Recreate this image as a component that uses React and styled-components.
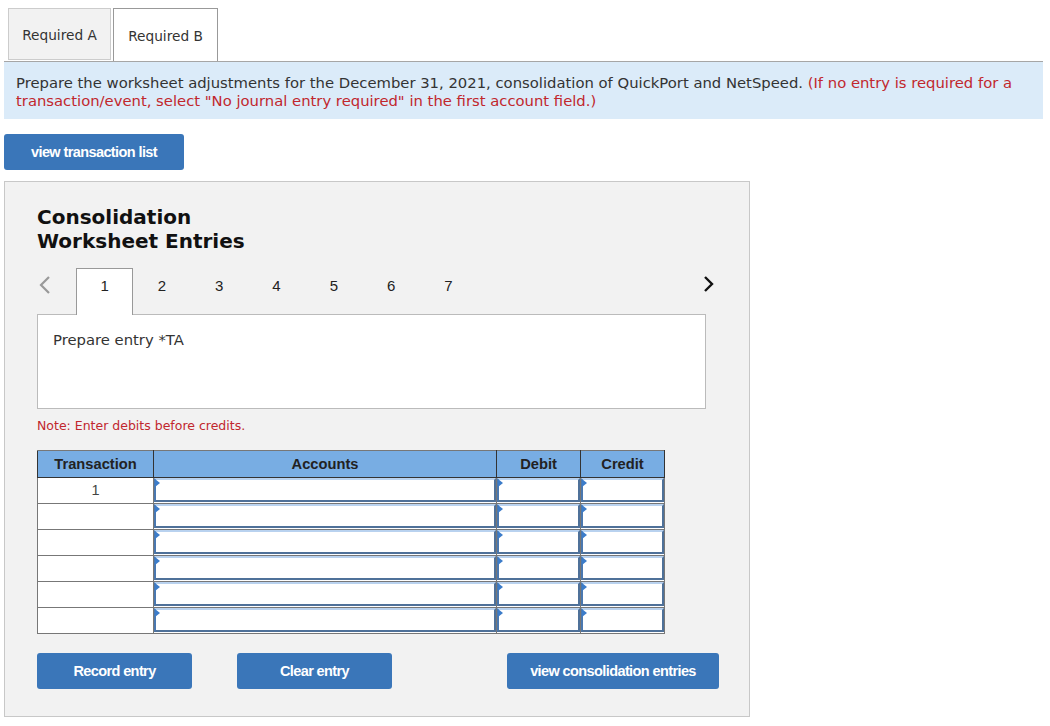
import React from 'react'
import styled, { createGlobalStyle } from 'styled-components'

const GlobalStyle = createGlobalStyle`
  body{
    margin: 0;
    background: #fff;
    font-family: "DejaVu Sans", Verdana, sans-serif;
    color: #222;
  }
`;

const Page = styled.div`
  padding: 8px 7px 0 4px;
`;

const TabBar = styled.div`
  display: flex;
  gap: 2px;
  padding-left: 4px;
  border-bottom: 1px solid #a6a6a6;
  height: 53px;
`;

const Tab = styled.div`
  width: ${p => p.active ? 105 : 103}px;
  height: ${p => p.active ? 53 : 52}px;
  box-sizing: border-box;
  border: 1px solid ${p => p.active ? '#999' : '#ccc'};
  border-bottom: ${p => p.active ? 'none' : '1px solid #ccc'};
  background: ${p => p.active ? '#fff' : '#f2f2f2'};
  display: flex;
  align-items: center;
  justify-content: center;
  font-size: 13.7px;
  color: #333;
  margin-bottom: ${p => p.active ? '-1px' : '0'};
  padding-top: 1px;
`;

const Banner = styled.div`
  background: #dbebf9;
  padding: 12px 12px 9px 12px;
  font-size: 14.8px;
  line-height: 18px;
  color: #333;
`;

const Hint = styled.span`
  color: #c1272d;
`;

const BlueButton = styled.button`
  background: #3a76b9;
  color: #fff;
  border: none;
  border-radius: 3px;
  height: 36px;
  width: ${p => p.w}px;
  font-family: "Liberation Sans", Arial, sans-serif;
  font-weight: bold;
  font-size: 14.5px;
  letter-spacing: -0.6px;
  padding: 0;
  cursor: pointer;
`;

const TopButton = styled(BlueButton)`
  margin-top: 15px;
`;

const Panel = styled.div`
  margin-top: 11px;
  width: 746px;
  height: 536px;
  box-sizing: border-box;
  background: #f2f2f2;
  border: 1px solid #c8c8c8;
  padding: 23px 32px 0 32px;
`;

const Title = styled.h1`
  margin: 0;
  font-size: 20px;
  line-height: 24px;
  font-weight: bold;
  color: #111;
`;

const Pager = styled.div`
  width: 678px;
  margin-top: 15px;
  display: flex;
  align-items: stretch;
  height: 46px;
`;

const Arrow = styled.div`
  width: 39px;
  display: flex;
  align-items: flex-start;
  padding-top: 8px;
  padding-left: 2px;
  box-sizing: border-box;
  margin-left: ${p => p.right ? 'auto' : '0'};
  justify-content: ${p => p.right ? 'flex-end' : 'flex-start'};
  padding-right: ${p => p.right ? '1px' : '0'};
`;

const PageTab = styled.div`
  width: 57.3px;
  box-sizing: border-box;
  display: flex;
  align-items: flex-start;
  justify-content: center;
  padding-top: 8px;
  font-family: "Liberation Sans", Arial, sans-serif;
  font-size: 15px;
  color: #222;
  background: ${p => p.active ? '#fff' : 'transparent'};
  border: 1px solid ${p => p.active ? '#999' : 'transparent'};
  border-bottom: none;
  position: relative;
  z-index: 1;
  margin-bottom: -1px;
`;

const Prompt = styled.div`
  width: 669px;
  height: 95px;
  box-sizing: border-box;
  background: #fff;
  border: 1px solid #bbb;
  padding: 16px 15px;
  font-size: 14.8px;
  color: #333;
`;

const Note = styled.div`
  margin-top: 9px;
  font-size: 12.5px;
  color: #c1272d;
  line-height: 16px;
`;

const Table = styled.table`
  margin-top: 16px;
  border-collapse: collapse;
  font-family: "Liberation Sans", Arial, sans-serif;
  th{
    background: #78ade3;
    height: 27px;
    box-sizing: border-box;
    border: 1px solid #333;
    border-top-color: #777;
    font-size: 14.7px;
    font-weight: bold;
    color: #222;
    padding: 0;
  }
  td{
    height: 26px;
    box-sizing: border-box;
    border: 1px solid #777;
    background: #fff;
    padding: 0;
    font-size: 14.5px;
    color: #444;
    text-align: center;
    vertical-align: top;
  }
`;

const RowNum = styled.div`
  padding-top: 3px;
  line-height: 18px;
`;

const Field = styled.div`
  height: 24px;
  box-sizing: border-box;
  border: 2px solid #4f7199;
  border-top: 2px solid #b9d2ef;
  border-left: 2px solid #4a78b0;
  position: relative;
  &::before{
    content: '';
    position: absolute;
    left: -1px;
    top: -1px;
    border-top: 4px solid transparent;
    border-bottom: 4px solid transparent;
    border-left: 5px solid #3c7cc9;
  }
`;

const Actions = styled.div`
  margin-top: 19px;
  display: flex;
  width: 682px;
  button:nth-child(2){
    margin-left: 45px;
  }
  button:last-child{
    margin-left: auto;
  }
`;

const Chevron = ({ dir, color, h, sw }) => (
  <svg width="12" height={h} viewBox={`0 0 12 ${h}`}>
    <path
      d={dir === 'left'
        ? `M10 1 L2 ${h / 2} L10 ${h - 1}`
        : `M3 1 L10 ${h / 2} L3 ${h - 1}`}
      fill="none"
      stroke={color}
      strokeWidth={sw}
    />
  </svg>
);

const rows = [1, 2, 3, 4, 5, 6];

const App = () => {
  return (
    <Page>
      <GlobalStyle />
      <TabBar>
        <Tab>Required A</Tab>
        <Tab active>Required B</Tab>
      </TabBar>
      <Banner>
        Prepare the worksheet adjustments for the December 31, 2021, consolidation of QuickPort and NetSpeed. <Hint>(If no entry is required for a transaction/event, select "No journal entry required" in the first account field.)</Hint>
      </Banner>
      <TopButton w={180}>view transaction list</TopButton>
      <Panel>
        <Title>Consolidation<br />Worksheet Entries</Title>
        <Pager>
          <Arrow><Chevron dir="left" color="#999" h={18} sw={2.2} /></Arrow>
          {[1, 2, 3, 4, 5, 6, 7].map(n => (
            <PageTab key={n} active={n === 1}>{n}</PageTab>
          ))}
          <Arrow right><Chevron dir="right" color="#111" h={16} sw={2.4} /></Arrow>
        </Pager>
        <Prompt>Prepare entry *TA</Prompt>
        <Note>Note: Enter debits before credits.</Note>
        <Table>
          <thead>
            <tr>
              <th style={{ width: 116 }}>Transaction</th>
              <th style={{ width: 343 }}>Accounts</th>
              <th style={{ width: 84 }}>Debit</th>
              <th style={{ width: 84 }}>Credit</th>
            </tr>
          </thead>
          <tbody>
            {rows.map(r => (
              <tr key={r}>
                <td>{r === 1 ? <RowNum>1</RowNum> : null}</td>
                <td><Field /></td>
                <td><Field /></td>
                <td><Field /></td>
              </tr>
            ))}
          </tbody>
        </Table>
        <Actions>
          <BlueButton w={155}>Record entry</BlueButton>
          <BlueButton w={155}>Clear entry</BlueButton>
          <BlueButton w={212}>view consolidation entries</BlueButton>
        </Actions>
      </Panel>
    </Page>
  )
}

export default App
